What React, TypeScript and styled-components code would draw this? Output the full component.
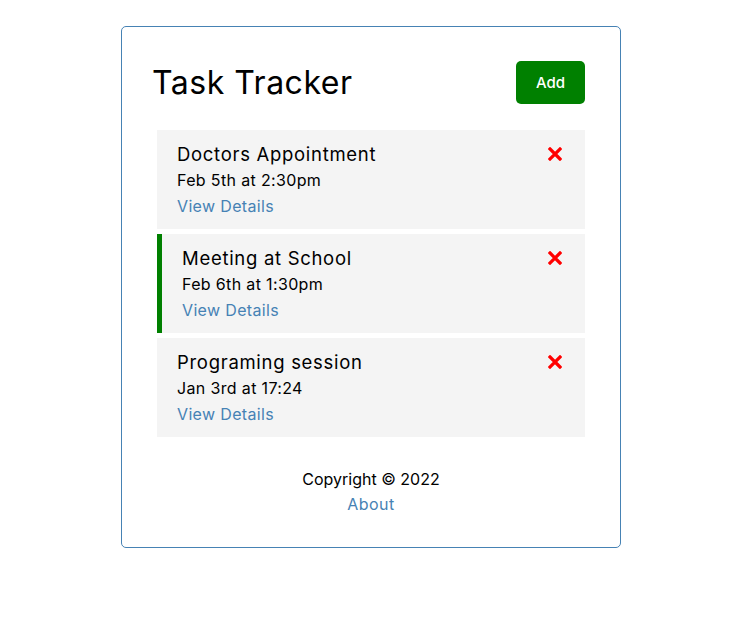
import React from "react";
import styled, { createGlobalStyle } from "styled-components";

const GlobalStyle = createGlobalStyle`
  * {
    box-sizing: border-box;
    margin: 0;
    padding: 0;
  }
  body {
    background: #fff;
    font-family: Inter, "Open Sans", sans-serif;
    color: #000;
    padding-right: 1px;
  }
`;

const Container = styled.div`
  width: 500px;
  margin: 26px auto 0;
  padding: 29px 30px 30px;
  border: 1px solid steelblue;
  border-radius: 5px;
`;

const Header = styled.header`
  display: flex;
  justify-content: space-between;
  align-items: center;
  margin-bottom: 21px;
`;

const Title = styled.h1`
  font-size: 32px;
  font-weight: 400;
  line-height: 40px;
  letter-spacing: 0.5px;
`;

const Button = styled.button<{ $bg?: string }>`
  background: ${(p) => p.$bg || "green"};
  color: #fff;
  border: none;
  border-radius: 5px;
  margin: 5px;
  padding: 0 20px;
  height: 43px;
  font-family: inherit;
  font-size: 15px;
  font-weight: 500;
  cursor: pointer;
`;

const TaskList = styled.div`
  display: flex;
  flex-direction: column;
  gap: 5px;
  padding: 0 5px;
`;

const TaskCard = styled.div<{ $reminder?: boolean }>`
  background: #f4f4f4;
  padding: 10px 20px;
  border-left: ${(p) => (p.$reminder ? "5px solid green" : "none")};
  cursor: pointer;
`;

const TaskTitle = styled.h3`
  display: flex;
  justify-content: space-between;
  align-items: center;
  font-size: 18.5px;
  font-weight: 400;
  line-height: 28px;
  letter-spacing: 0.7px;
`;

const TaskDay = styled.p`
  font-size: 16px;
  line-height: 25px;
  letter-spacing: 0.35px;
`;

const DetailsLink = styled.a`
  display: block;
  color: steelblue;
  text-decoration: none;
  font-size: 16px;
  line-height: 26px;
  letter-spacing: 0.35px;
`;

const Close = styled.svg`
  width: 14px;
  height: 14px;
  margin-right: 3px;
  flex-shrink: 0;
`;

const Footer = styled.footer`
  margin-top: 30px;
  text-align: center;
  font-size: 16px;
  line-height: 25px;
`;

const FooterLink = styled.a`
  color: steelblue;
  text-decoration: none;
  letter-spacing: 0.5px;
`;

const tasks = [
  { id: 1, text: "Doctors Appointment", day: "Feb 5th at 2:30pm", reminder: false },
  { id: 2, text: "Meeting at School", day: "Feb 6th at 1:30pm", reminder: true },
  { id: 3, text: "Programing session", day: "Jan 3rd at 17:24", reminder: false },
];

const CloseIcon = () => (
  <Close viewBox="0 0 14 14">
    <path d="M2 2 L12 12 M12 2 L2 12" stroke="red" strokeWidth="3.2" strokeLinecap="square" />
  </Close>
);

export default function App() {
  return (
    <>
      <GlobalStyle />
      <Container>
        <Header>
          <Title>Task Tracker</Title>
          <Button>Add</Button>
        </Header>
        <TaskList>
          {tasks.map((t) => (
            <TaskCard key={t.id} $reminder={t.reminder}>
              <TaskTitle>
                {t.text}
                <CloseIcon />
              </TaskTitle>
              <TaskDay>{t.day}</TaskDay>
              <DetailsLink href="#">View Details</DetailsLink>
            </TaskCard>
          ))}
        </TaskList>
        <Footer>
          <p>Copyright &copy; 2022</p>
          <FooterLink href="#">About</FooterLink>
        </Footer>
      </Container>
    </>
  );
}
